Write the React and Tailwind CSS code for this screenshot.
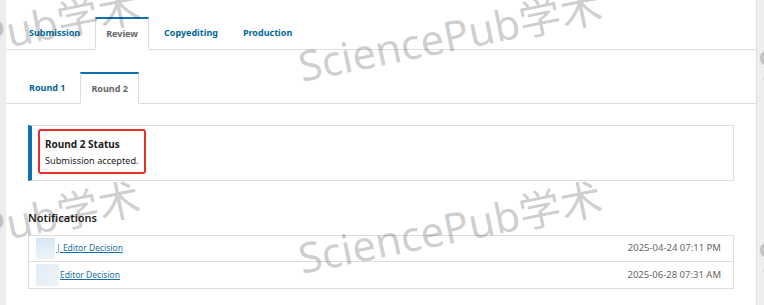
import React from "react";

function Watermark({ className }) {
  return (
    <span
      className={
        "pointer-events-none absolute whitespace-nowrap text-[42px] leading-none text-black/20 origin-[0_37px] rotate-[-11.5deg] font-['Noto_Sans','Noto_Sans_CJK_SC',sans-serif] " +
        className
      }
    >
      SciencePub学术
    </span>
  );
}

export default function App() {
  return (
    <div className="relative flex h-[305px] w-[764px] overflow-hidden bg-white font-['Noto_Sans',sans-serif]">
      <div className="w-[6px] shrink-0 bg-[#ededed]" />

      <div className="flex min-w-0 flex-1 flex-col">
        {/* main tabs */}
        <div className="flex items-end gap-[5px] border-b border-[#dddddd] pl-[13px] pt-[17px]">
          <div className="flex h-[32px] items-center px-[10px] text-[9px] font-bold text-[#006798]">
            Submission
          </div>
          <div className="-mb-px flex h-[33px] items-center border border-b-white border-[#dddddd] border-t-2 border-t-[#0b72b0] bg-white px-[10px] text-[9px] font-bold text-[#666666]">
            Review
          </div>
          <div className="flex h-[32px] items-center px-[10px] text-[9px] font-bold text-[#006798]">
            Copyediting
          </div>
          <div className="flex h-[32px] items-center px-[10px] text-[9px] font-bold text-[#006798]">
            Production
          </div>
        </div>

        {/* round tabs */}
        <div className="flex items-end gap-[5px] border-b border-[#dddddd] pl-[13px] pt-[22px]">
          <div className="flex h-[31px] items-center px-[10px] text-[9px] font-bold text-[#006798]">
            Round 1
          </div>
          <div className="-mb-px flex h-[32px] items-center border border-b-white border-[#dddddd] border-t-2 border-t-[#0b72b0] bg-white px-[10px] text-[9px] font-bold text-[#666666]">
            Round 2
          </div>
        </div>

        {/* status */}
        <div className="mx-[22px] mt-[21px] flex h-[56px] items-start border border-l-4 border-[#dddddd] border-l-[#0b72b0] pl-[6px] pt-[3px]">
          <div className="h-[45px] whitespace-nowrap rounded-[3px] border-2 border-[#e5302b] px-[5px] pt-[6px]">
            <div className="text-[10px] font-bold leading-[14px] text-[#222222]">Round 2 Status</div>
            <div className="mt-[3px] text-[9.2px] leading-[14px] text-[#222222]">Submission accepted.</div>
          </div>
        </div>

        {/* notifications */}
        <div className="mx-[22px] mt-[29px] text-[11px] font-semibold leading-[16px] text-[#222222]">
          Notifications
        </div>
        <div className="mx-[22px] mt-[9px] border border-[#dddddd]">
          <div className="flex h-[26px] items-center border-b border-[#dddddd] pl-[7px] pr-[12px]">
            <div className="h-[21px] w-[19px] bg-linear-to-b from-[#d6e6f2] to-[#eef4f8]" />
            <a className="ml-[1px] text-[8.5px] text-[#1a6fa8] underline underline-offset-1">| Editor Decision</a>
            <div className="ml-auto text-[9.5px] text-[#666666]">2025-04-24 07:11 PM</div>
          </div>
          <div className="flex h-[26px] items-center pl-[7px] pr-[12px]">
            <div className="h-[22px] w-[23px] bg-linear-to-br from-[#e1ecf5] to-[#eef4f8]" />
            <a className="ml-[1px] text-[8.5px] text-[#1a6fa8] underline underline-offset-1">Editor Decision</a>
            <div className="ml-auto text-[9.5px] text-[#666666]">2025-06-28 07:31 AM</div>
          </div>
        </div>
      </div>

      <div className="w-[8px] shrink-0 border-l border-[#e2e2e2] bg-[#eeeeee]" />

      <Watermark className="left-[-160px] top-[45px]" />
      <Watermark className="left-[302px] top-[45px]" />
      <Watermark className="left-[762px] top-[45px]" />
      <Watermark className="left-[-160px] top-[237px]" />
      <Watermark className="left-[302px] top-[237px]" />
      <Watermark className="left-[762px] top-[237px]" />
    </div>
  );
}
